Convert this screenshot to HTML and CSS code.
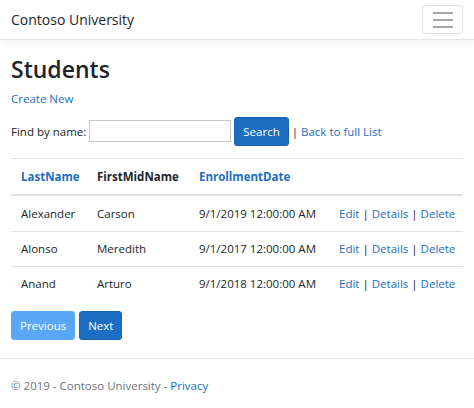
FILE: index.html
```html
<!DOCTYPE html>
<html lang="en">

<head>
  <meta charset="UTF-8">
  <meta name="viewport" content="width=device-width, initial-scale=1.0">
  <title>Students - Contoso University</title>
  <link rel="stylesheet" href="styles.css">
</head>

<body>
  <header class="navbar">
    <a class="navbar-brand" href="#">Contoso University</a>
    <button class="navbar-toggler" type="button" aria-label="Toggle navigation">
      <svg width="22" height="16" viewBox="0 0 22 16">
        <path d="M1 1h20M1 8h20M1 15h20" stroke="#8a8a8a" stroke-width="1.6" fill="none" />
      </svg>
    </button>
  </header>

  <main class="container">
    <h1>Students</h1>
    <p class="create"><a href="#">Create New</a></p>

    <form class="search-form">
      <label for="search">Find by name:</label>
      <input id="search" type="text">
      <button class="btn btn-primary" type="submit">Search</button>
      <span class="sep">|</span>
      <a href="#">Back to full List</a>
    </form>

    <table class="table">
      <thead>
        <tr>
          <th class="col-last"><a href="#">LastName</a></th>
          <th class="col-first">FirstMidName</th>
          <th class="col-date"><a href="#">EnrollmentDate</a></th>
          <th></th>
        </tr>
      </thead>
      <tbody>
        <tr>
          <td>Alexander</td>
          <td>Carson</td>
          <td>9/1/2019 12:00:00 AM</td>
          <td><a href="#">Edit</a> | <a href="#">Details</a> | <a href="#">Delete</a></td>
        </tr>
        <tr>
          <td>Alonso</td>
          <td>Meredith</td>
          <td>9/1/2017 12:00:00 AM</td>
          <td><a href="#">Edit</a> | <a href="#">Details</a> | <a href="#">Delete</a></td>
        </tr>
        <tr>
          <td>Anand</td>
          <td>Arturo</td>
          <td>9/1/2018 12:00:00 AM</td>
          <td><a href="#">Edit</a> | <a href="#">Details</a> | <a href="#">Delete</a></td>
        </tr>
      </tbody>
    </table>

    <div class="pager">
      <a class="btn btn-primary disabled" href="#">Previous</a>
      <a class="btn btn-primary" href="#">Next</a>
    </div>
  </main>

  <footer class="footer">
    <div class="container">
      &copy; 2019 - Contoso University - <a href="#">Privacy</a>
    </div>
  </footer>
</body>

</html>
```

FILE: styles.css
```css
body {
  margin: 0;
  font-family: "Open Sans", "Noto Sans", sans-serif;
  font-size: 11.5px;
  line-height: 1.5;
  color: #212529;
  background: #fff;
}

a {
  color: #1b6ec2;
  text-decoration: none;
}

.navbar {
  height: 40px;
  box-sizing: border-box;
  display: flex;
  align-items: center;
  justify-content: space-between;
  padding: 0 11px;
  border-bottom: 1px solid #e5e5e5;
  box-shadow: 0 3px 8px rgba(0, 0, 0, 0.05);
}

.navbar-brand {
  font-size: 14px;
  color: #212529;
}

.navbar-toggler {
  width: 41px;
  height: 29px;
  display: flex;
  align-items: center;
  justify-content: center;
  background: #fff;
  border: 1px solid #e3e3e3;
  border-radius: 3px;
  padding: 0;
}

.container {
  padding: 0 11px;
}

h1 {
  font-size: 23px;
  font-weight: 600;
  line-height: 1.2;
  margin: 16px 0 6px;
}

.create {
  margin: 0 0 10px;
}

.search-form {
  display: flex;
  align-items: center;
  gap: 3px;
  margin-bottom: 12px;
}

.search-form input {
  width: 142px;
  height: 22px;
  box-sizing: border-box;
  border: 1px solid #c8c8c8;
  margin: 0;
}

.btn {
  display: inline-block;
  font-family: inherit;
  font-size: 11.5px;
  line-height: 1.5;
  padding: 5px 8px;
  border-radius: 3px;
  border: 1px solid transparent;
  cursor: pointer;
}

.btn-primary {
  color: #fff;
  background: #1b6ec2;
  border-color: #1861ac;
}

.btn-primary.disabled {
  background: #5aa7f7;
  border-color: #5aa7f7;
}

.sep {
  color: #212529;
}

.table {
  width: 100%;
  table-layout: fixed;
  border-collapse: collapse;
  margin-bottom: 10px;
}

.table th,
.table td {
  text-align: left;
  padding: 8.5px 10px;
  border-top: 1px solid #dee2e6;
  white-space: nowrap;
}

.table th {
  font-weight: 700;
  padding-top: 9px;
  padding-bottom: 9px;
  border-bottom: 2px solid #dee2e6;
}

.col-last {
  width: 56px;
}

.col-first {
  width: 82px;
}

.col-date {
  width: 120px;
}

.pager {
  display: flex;
  gap: 4px;
  margin-bottom: 18px;
}

.footer {
  border-top: 1px solid #e5e5e5;
  padding: 18px 0;
  color: #6c757d;
}
```
